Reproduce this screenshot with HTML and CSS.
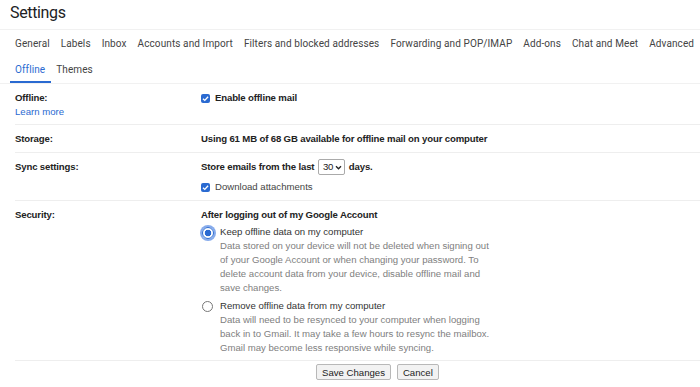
FILE: index.html
```html
<!DOCTYPE html>
<html lang="en">
<head>
  <meta charset="utf-8"/>
  <title>Settings</title>
  <link rel="stylesheet" href="styles.css">
</head>
<body>

  <!-- Titre -->
  <header class="page-head">
    <h1>Settings</h1>
  </header>

  <!-- Onglets -->
  <nav class="tabs">
    <div class="tab-row">
      <a>General</a>
      <a>Labels</a>
      <a>Inbox</a>
      <a>Accounts and Import</a>
      <a>Filters and blocked addresses</a>
      <a>Forwarding and POP/IMAP</a>
      <a>Add-ons</a>
      <a>Chat and Meet</a>
      <a>Advanced</a>
    </div>
    <div class="tab-row">
      <a class="active">Offline</a>
      <a>Themes</a>
    </div>
  </nav>

  <!-- Lignes de réglages -->
  <main class="settings">
    <div class="row first">
      <div class="label">
        <b>Offline:</b>
        <a class="learn">Learn more</a>
      </div>
      <div class="value">
        <div class="check-line bold"><span class="checkbox"><svg viewBox="0 0 10 10"><path d="M2.2 5.2 L4.2 7.1 L7.9 3" fill="none" stroke="#fff" stroke-width="1.5"/></svg></span>Enable offline mail</div>
      </div>
    </div>

    <div class="row">
      <div class="label"><b>Storage:</b></div>
      <div class="value"><b>Using 61 MB of 68 GB available for offline mail on your computer</b></div>
    </div>

    <div class="row">
      <div class="label"><b>Sync settings:</b></div>
      <div class="value">
        <div class="bold">Store emails from the last <span class="select">30<svg viewBox="0 0 8 6"><path d="M1 1.5 L4 4.5 L7 1.5" fill="none" stroke="#222" stroke-width="1.6"/></svg></span> days.</div>
        <div class="check-line gap"><span class="checkbox"><svg viewBox="0 0 10 10"><path d="M2.2 5.2 L4.2 7.1 L7.9 3" fill="none" stroke="#fff" stroke-width="1.5"/></svg></span>Download attachments</div>
      </div>
    </div>

    <div class="row">
      <div class="label"><b>Security:</b></div>
      <div class="value">
        <div class="bold">After logging out of my Google Account</div>
        <div class="option">
          <span class="radio on"></span>
          <div>
            <div class="opt-title">Keep offline data on my computer</div>
            <div class="desc">Data stored on your device will not be deleted when signing out of your Google Account or when changing your password. To delete account data from your device, disable offline mail and save changes.</div>
          </div>
        </div>
        <div class="option">
          <span class="radio"></span>
          <div>
            <div class="opt-title">Remove offline data from my computer</div>
            <div class="desc">Data will need to be resynced to your computer when logging back in to Gmail. It may take a few hours to resync the mailbox. Gmail may become less responsive while syncing.</div>
          </div>
        </div>
      </div>
    </div>

    <div class="actions">
      <button>Save Changes</button>
      <button>Cancel</button>
    </div>
  </main>

</body>
</html>
```

FILE: styles.css
```css
/* -------------------- Base -------------------- */
* { box-sizing: border-box; }
html, body {
  margin: 0;
  padding: 0;
  background: #fff;
  color: #222;
  font-family: "Liberation Sans", Arial, sans-serif;
  font-size: 9.6px;
}

/* -------------------- Titre -------------------- */
.page-head {
  height: 30px;
  border-bottom: 1px solid #f1f1f1;
  padding: 2px 0 0 10px;
}
.page-head h1 {
  margin: 0;
  font-family: Roboto, "Open Sans", sans-serif;
  font-weight: 400;
  font-size: 16px;
  letter-spacing: -.35px;
  line-height: 22px;
  color: #202124;
}

/* -------------------- Onglets -------------------- */
.tabs {
  padding: 1px 0 0 9.5px;
  border-bottom: 1px solid #f1f1f1;
  font-family: Roboto, "Open Sans", sans-serif;
}
.tab-row {
  display: flex;
  height: 26px;
  align-items: center;
}
.tab-row a {
  color: #444;
  padding: 0 5.5px;
  line-height: 26px;
  height: 26px;
  white-space: nowrap;
  font-size: 10px;
  letter-spacing: .1px;
}
.tab-row a.active {
  color: #2a6ad1;
  border-bottom: 2px solid #2a6ad1;
}

/* -------------------- Réglages -------------------- */
.settings {
  padding: 0 0 0 15px;
}
.row {
  display: flex;
  padding: 7px 0 6px;
  border-bottom: 1px solid #eee;
  line-height: 14px;
}
.row.first { padding-bottom: 5px; }
.label {
  width: 186px;
  flex: none;
  display: flex;
  flex-direction: column;
}
.label b, .bold, .value b { letter-spacing: -.15px; }
.label .learn { color: #2a6ad1; }
.value { flex: 1; }
.bold { font-weight: 700; }

.check-line {
  display: flex;
  align-items: center;
}
.check-line.gap { margin-top: 6px; color: #444; }
.checkbox {
  width: 9px;
  height: 9px;
  border-radius: 2px;
  background: #2a6ad1;
  margin-right: 5px;
  display: inline-flex;
}
.checkbox svg { width: 9px; height: 9px; }

.select {
  display: inline-flex;
  align-items: center;
  gap: 2px;
  height: 16px;
  margin: -1px 1px;
  padding: 0 2px 0 4px;
  border: 1px solid #aaa;
  border-radius: 2px;
  font-weight: 400;
  vertical-align: middle;
  line-height: 14px;
}
.select svg { width: 7px; height: 5px; }

.option {
  display: flex;
  margin-top: 3px;
}
.option + .option { margin-top: 5px; }
.radio {
  width: 11px;
  height: 11px;
  flex: none;
  border: 1px solid #777;
  border-radius: 50%;
  margin: 2px 7px 0 1px;
}
.radio.on {
  width: 12px;
  height: 12px;
  margin: 1.5px 6px 0 1px;
  border: 1px solid #2a6ad1;
  background: radial-gradient(circle, #2a6ad1 0 3px, #fff 3.6px);
  box-shadow: 0 0 0 2px #86abec;
}
.opt-title { color: #333; }
.desc {
  color: #808080;
  width: 278px;
  line-height: 13.7px;
}

/* -------------------- Boutons -------------------- */
.actions {
  display: flex;
  gap: 6px;
  padding: 3px 0 0 301px;
}
.actions button {
  font-family: "Liberation Sans", Arial, sans-serif;
  font-size: 9.6px;
  height: 16px;
  padding: 0 5px;
  background: #f2f2f2;
  border: 1px solid #b8b8b8;
  border-radius: 2px;
  color: #222;
}
```
